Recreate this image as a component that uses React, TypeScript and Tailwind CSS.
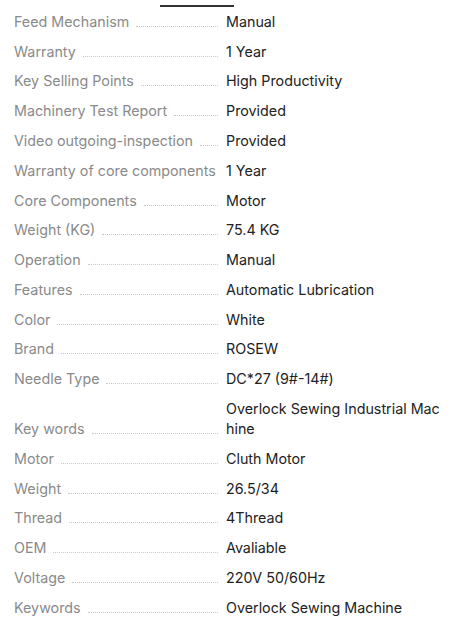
import React from 'react';

const specs: [string, string][] = [
    ['Feed Mechanism', 'Manual'],
    ['Warranty', '1 Year'],
    ['Key Selling Points', 'High Productivity'],
    ['Machinery Test Report', 'Provided'],
    ['Video outgoing-inspection', 'Provided'],
    ['Warranty of core components', '1 Year'],
    ['Core Components', 'Motor'],
    ['Weight (KG)', '75.4 KG'],
    ['Operation', 'Manual'],
    ['Features', 'Automatic Lubrication'],
    ['Color', 'White'],
    ['Brand', 'ROSEW'],
    ['Needle Type', 'DC*27 (9#-14#)'],
    ['Key words', 'Overlock Sewing Industrial Machine'],
    ['Motor', 'Cluth Motor'],
    ['Weight', '26.5/34'],
    ['Thread', '4Thread'],
    ['OEM', 'Avaliable'],
    ['Voltage', '220V 50/60Hz'],
    ['Keywords', 'Overlock Sewing Machine'],
];

export default function App() {
    return (
        <div className="w-[450px] min-h-[639px] bg-white font-['Inter',sans-serif] text-[14.3px] leading-[20px]">
            {/* tab indicator */}
            <div className="pt-[5px]">
                <div className="ml-[160px] w-[74px] h-[2px] bg-[#333]" />
            </div>

            <div className="pl-[14px] pr-[10px]">
                {specs.map(([label, value]) => (
                    <div key={label} className="flex items-end py-[4.9px]">
                        <div className="w-[204px] shrink-0 flex items-end">
                            <span className="text-[#8a8a8a] whitespace-nowrap">{label}</span>
                            <span className="flex-1 ml-[7px] mb-[5px] border-b border-dotted border-[#c8c8c8]" />
                        </div>
                        <div className="flex-1 ml-[8px] text-[#222] break-all">{value}</div>
                    </div>
                ))}
            </div>
        </div>
    );
}
